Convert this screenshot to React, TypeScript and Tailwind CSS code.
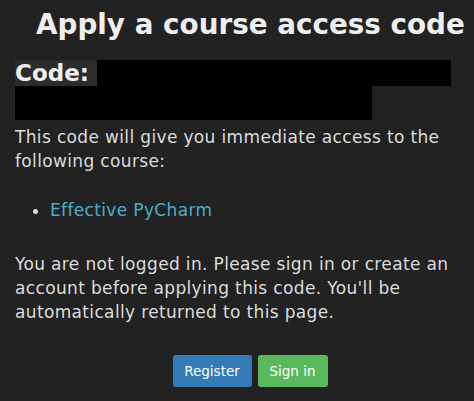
export default function App() {
  return (
    <div
      className="w-[474px] h-[401px] overflow-hidden bg-[#222222] text-[#dcdcdc] px-[15px]"
      style={{ fontFamily: '"DejaVu Sans", "Liberation Sans", sans-serif' }}
    >
      <h1 className="pl-[21px] pt-[6px] text-[27.8px] leading-[38px] font-bold text-[#eeeeee] whitespace-nowrap">
        Apply a course access code
      </h1>

      <div className="mt-[16px] flex flex-col">
        <div className="flex items-stretch h-[26px]">
          <span className="w-[82px] bg-[#2c2c2c] text-[23px] leading-[26px] font-bold text-[#eeeeee]">
            Code:
          </span>
          <span className="w-[354px] bg-black" />
        </div>
        <div className="w-[357px] h-[34px] bg-black" />
      </div>

      <div className="text-[17px] leading-[24px] tracking-[0.35px]">
        <p className="mt-[5px] w-[444px]">
          This code will give you immediate access to the following course:
        </p>

        <ul className="mt-[25px] pl-[35px] list-disc">
          <li>
            <a className="text-[#4aaecb]">Effective PyCharm</a>
          </li>
        </ul>

        <p className="mt-[30px] w-[444px]">
          You are not logged in. Please sign in or create an account before
          applying this code. You'll be automatically returned to this page.
        </p>
      </div>

      <div className="mt-[31px] flex justify-center gap-[6px] pl-[26px]">
        <button className="w-[79px] h-[32px] rounded-[3px] bg-[#337ab7] text-white text-[13.5px]">
          Register
        </button>
        <button className="w-[70px] h-[32px] rounded-[3px] bg-[#5cb85c] text-white text-[13.5px]">
          Sign in
        </button>
      </div>
    </div>
  );
}
